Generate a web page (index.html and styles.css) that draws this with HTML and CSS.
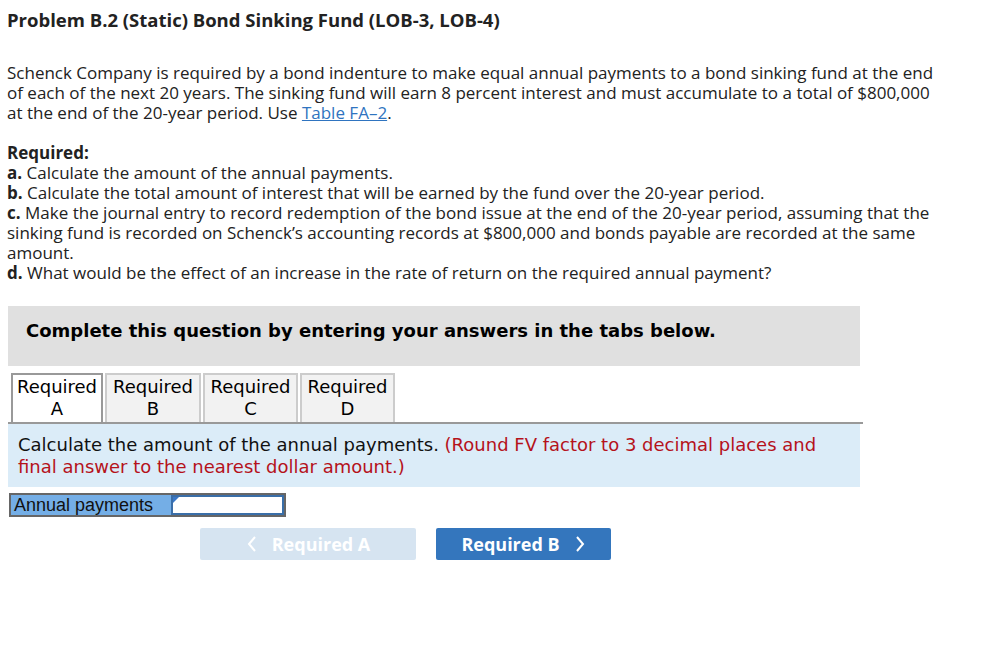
FILE: index.html
```html
<!DOCTYPE html>
<html lang="en">
<head>
    <meta charset="UTF-8">
    <title>Problem B.2 (Static) Bond Sinking Fund</title>
    <link rel="stylesheet" href="styles.css">
</head>
<body>
    <div class="question">
        <h1>Problem B.2 (Static) Bond Sinking Fund (LOB-3, LOB-4)</h1>
        <p class="intro">Schenck Company is required by a bond indenture to make equal annual payments to a bond sinking fund at the end of each of the next 20 years. The sinking fund will earn 8 percent interest and must accumulate to a total of $800,000 at the end of the 20-year period. Use <a href="#">Table FA&ndash;2</a>.</p>
        <div class="required">
            <strong>Required:</strong><br>
            <strong>a.</strong> Calculate the amount of the annual payments.<br>
            <strong>b.</strong> Calculate the total amount of interest that will be earned by the fund over the 20-year period.<br>
            <strong>c.</strong> Make the journal entry to record redemption of the bond issue at the end of the 20-year period, assuming that the sinking fund is recorded on Schenck&rsquo;s accounting records at $800,000 and bonds payable are recorded at the same amount.<br>
            <strong>d.</strong> What would be the effect of an increase in the rate of return on the required annual payment?
        </div>

        <div class="instructions">Complete this question by entering your answers in the tabs below.</div>

        <div class="tabs">
            <div class="tab active">Required<br>A</div>
            <div class="tab">Required<br>B</div>
            <div class="tab">Required<br>C</div>
            <div class="tab">Required<br>D</div>
        </div>
        <div class="tab-body">
            Calculate the amount of the annual payments. <span class="hint">(Round FV factor to 3 decimal places and final answer to the nearest dollar amount.)</span>
        </div>

        <div class="answer-row">
            <label for="annualPayments">Annual payments</label>
            <div class="answer-cell">
                <span class="marker"></span>
                <input type="text" id="annualPayments">
            </div>
        </div>

        <div class="nav">
            <button class="nav-btn prev" disabled>
                <svg width="12" height="18" viewBox="0 0 12 18"><path d="M9 2 L3 9 L9 16" fill="none" stroke="currentColor" stroke-width="2"/></svg>
                Required A
            </button>
            <button class="nav-btn next">
                Required B
                <svg width="12" height="18" viewBox="0 0 12 18"><path d="M3 2 L9 9 L3 16" fill="none" stroke="currentColor" stroke-width="2"/></svg>
            </button>
        </div>
    </div>
</body>
</html>
```

FILE: styles.css
```css
body {
    margin: 0;
    padding: 0;
    background-color: #fff;
    color: #222;
    font-family: "Open Sans", Lato, sans-serif;
}
.question {
    width: 935px;
    padding: 8px 0 0 7px;
}
h1 {
    font-size: 18.5px;
    font-weight: bold;
    margin: 0 0 31px 0;
    line-height: 24px;
}
.intro {
    font-size: 17px;
    line-height: 20px;
    margin: 0 0 20px 0;
}
.intro a {
    color: #2f74c0;
}
.required {
    font-size: 17px;
    line-height: 20px;
    margin-bottom: 23px;
}
.instructions {
    background-color: #e0e0e0;
    width: 834px;
    margin-left: 1px;
    padding: 14px 0 24px 18px;
    font-family: "DejaVu Sans", Verdana, sans-serif;
    font-weight: bold;
    font-size: 18px;
    line-height: 22px;
    color: #000;
}
.tabs {
    display: flex;
    gap: 2px;
    margin: 7px 0 0 1px;
    width: 852px;
    border-bottom: 2px solid #999;
    padding-left: 3px;
}
.tab {
    box-sizing: border-box;
    width: 95px;
    height: 49px;
    border: 2px solid #ccc;
    border-bottom: none;
    background-color: #f2f2f2;
    text-align: center;
    font-family: "DejaVu Sans", Verdana, sans-serif;
    font-size: 18px;
    line-height: 22px;
    color: #000;
    padding-top: 1px;
}
.tab.active {
    width: 92px;
    background-color: #fff;
    border-color: #999;
}
.tab:nth-child(2) {
    width: 96px;
}
.tab-body {
    background-color: #dbecf8;
    width: 832px;
    margin-left: 1px;
    padding: 10px 10px 9px 10px;
    font-family: "DejaVu Sans", Verdana, sans-serif;
    font-size: 18px;
    line-height: 22px;
    color: #111;
}
.hint {
    color: #b5121b;
}
.answer-row {
    display: flex;
    margin: 6px 0 0 2px;
    width: 277px;
    border: 2px solid #666;
    box-sizing: border-box;
}
.answer-row label {
    flex: none;
    white-space: nowrap;
    background-color: #74aee6;
    width: 160px;
    font-family: "Liberation Sans", Arial, sans-serif;
    font-size: 18px;
    line-height: 20px;
    padding-left: 3px;
    box-sizing: border-box;
    color: #111;
}
.answer-cell {
    flex: 1;
    min-width: 0;
    display: flex;
    position: relative;
}
.answer-cell input {
    flex: 1;
    width: 100%;
    min-width: 0;
    border: 2px solid #3a6ea8;
    height: 20px;
    box-sizing: border-box;
    margin: 0;
    padding: 0;
}
.marker {
    position: absolute;
    left: 2px;
    top: 2px;
    width: 0;
    height: 0;
    border-top: 6px solid #3a78c8;
    border-right: 6px solid transparent;
}
.nav {
    display: flex;
    gap: 20px;
    margin: 11px 0 0 193px;
}
.nav-btn {
    height: 32px;
    border: none;
    border-radius: 2px;
    color: #fff;
    font-family: "Open Sans", sans-serif;
    font-weight: bold;
    font-size: 18px;
    display: flex;
    align-items: center;
    justify-content: center;
    gap: 14px;
    padding: 0;
}
.nav-btn.prev {
    width: 216px;
    background-color: #d6e4f1;
}
.nav-btn.next {
    width: 175px;
    background-color: #3476bd;
    cursor: pointer;
}
```
